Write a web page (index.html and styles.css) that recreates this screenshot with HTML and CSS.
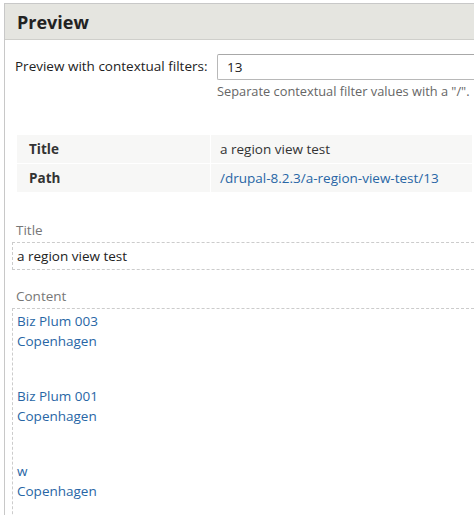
FILE: index.html
```html
<!DOCTYPE html>
<html>
<head>
<meta charset="utf-8">
<link rel="stylesheet" href="styles.css">
</head>
<body>
<div class="panel">
  <div class="panel-head">Preview</div>
  <div class="panel-body">
    <div class="filter-row">
      <label class="filter-label">Preview with contextual filters:</label>
      <div class="filter-field">
        <div class="input">13</div>
        <div class="desc">Separate contextual filter values with a "/".</div>
      </div>
    </div>
    <table class="info">
      <tr><th>Title</th><td>a region view test</td></tr>
      <tr><th>Path</th><td><a href="#">/drupal-8.2.3/a-region-view-test/13</a></td></tr>
    </table>
    <div class="region">
      <div class="region-label">Title</div>
      <div class="region-box">a region view test</div>
    </div>
    <div class="region">
      <div class="region-label">Content</div>
      <div class="region-box content">
        <div class="item"><a href="#">Biz Plum 003</a><a href="#">Copenhagen</a></div>
        <div class="item"><a href="#">Biz Plum 001</a><a href="#">Copenhagen</a></div>
        <div class="item"><a href="#">w</a><a href="#">Copenhagen</a></div>
      </div>
    </div>
  </div>
</div>
</body>
</html>
```
FILE: styles.css
```css
html, body {
  margin: 0;
  padding: 0;
  background: #fff;
  overflow: hidden;
}
body {
  font-family: "Open Sans", "DejaVu Sans", sans-serif;
  font-size: 13.5px;
  color: #222;
  padding: 3px 0 0 4px;
  height: 515px;
  box-sizing: border-box;
}
.panel {
  border-left: 1px solid #c8c8c8;
  border-top: 1px solid #c8c8c8;
  height: 100%;
}
.panel-head {
  background: #e5e5e0;
  border-bottom: 1px solid #cfcfcb;
  height: 36px;
  box-sizing: border-box;
  padding: 6px 0 0 12px;
  font-size: 18px;
  font-weight: 700;
  color: #222;
  line-height: 24px;
}
.panel-body {
  padding: 14px 0 0 10px;
}
.filter-row {
  display: flex;
  align-items: flex-start;
}
.filter-label {
  width: 202px;
  flex: none;
  line-height: 20px;
  padding-top: 2px;
}
.filter-field {
  flex: 1;
  min-width: 0;
}
.input {
  height: 26px;
  box-sizing: border-box;
  border: 1px solid #b8b8b8;
  border-top-color: #a8a8a8;
  border-right: none;
  border-radius: 2px 0 0 2px;
  padding: 3px 9px;
  line-height: 19px;
  font-size: 13.5px;
}
.desc {
  font-size: 12.8px;
  color: #666;
  margin-top: 3px;
  line-height: 17px;
  white-space: nowrap;
}
.info {
  border-collapse: separate;
  border-spacing: 0 1px;
  margin: 34px 0 0 2px;
  width: 455px;
}
.info th, .info td {
  background: #f7f7f6;
  text-align: left;
  padding: 0 0 0 12px;
  height: 28px;
  line-height: 20px;
}
.info th {
  font-weight: 700;
  color: #333;
  width: 181px;
  border-right: 1px solid #fff;
}
.info td {
  padding-left: 9px;
  color: #333;
}
a {
  color: #2866a5;
  text-decoration: none;
}
.region {
  margin-top: 27px;
}
.region + .region {
  margin-top: 16px;
}
.region-label {
  color: #777;
  line-height: 20px;
  margin-left: 1px;
  margin-bottom: 2px;
}
.region-box {
  border: 1px dashed #ccc;
  border-right: none;
  margin-left: -3px;
  padding: 3px 4px 3px;
  line-height: 20px;
}
.region-box.content {
  padding-top: 2px;
  border-bottom: none;
}
.item {
  display: flex;
  flex-direction: column;
  align-items: flex-start;
  padding-bottom: 35px;
}
```
